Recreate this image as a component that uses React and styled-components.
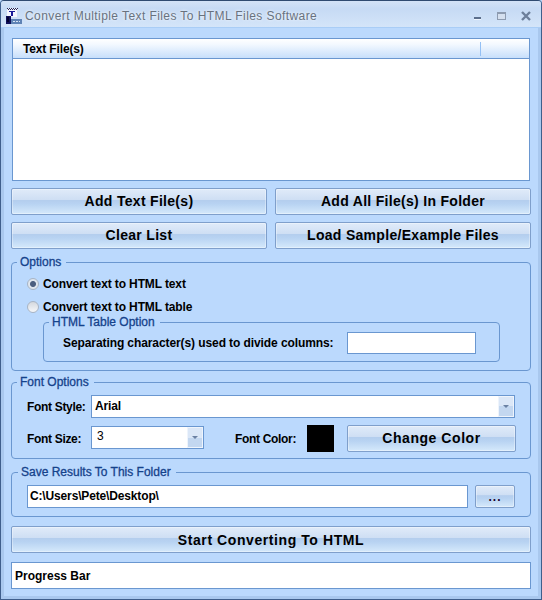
import React from "react";
import styled, { createGlobalStyle } from "styled-components";

const Global = createGlobalStyle`
  html, body {
    margin: 0;
    padding: 0;
    background: #bbd9fd;
  }
  * {
    box-sizing: border-box;
  }
`;

const AppIcon = () => (
  <svg width="16" height="16" viewBox="0 0 16 16" shapeRendering="crispEdges">
    <rect x="1" y="0" width="11" height="2" fill="#f4f6ff" />
    <path d="M1 0h1v1H1zM3 0h1v1H3zM5 0h1v1H5zM7 0h1v1H7zM9 0h1v1H9zM11 0h1v1h-1zM2 1h1v1H2zM4 1h1v1H4zM6 1h1v1H6zM8 1h1v1H8zM10 1h1v1h-1z" fill="#23234f" />
    <rect x="1" y="2" width="10" height="7" fill="#f4f6ff" />
    <path d="M3 3h6v1H7v4H5V4H3z" fill="#1a1a9a" />
    <rect x="0" y="8" width="5" height="8" fill="#10105a" />
    <rect x="1" y="9" width="2" height="5" fill="#000030" />
    <rect x="5" y="11" width="11" height="5" fill="#5f83b5" />
    <rect x="7" y="13" width="2" height="1" fill="#d8e4f4" />
    <rect x="10" y="13" width="2" height="1" fill="#d8e4f4" />
    <rect x="13" y="13" width="1" height="1" fill="#d8e4f4" />
  </svg>
);

const Arrow = () => (
  <svg width="6" height="3" viewBox="0 0 6 3">
    <path d="M0 0h6L3 3z" fill="#6b81a3" />
  </svg>
);

const App = () => {
  return (
    <Window>
      <Global />
      <TitleBar>
        <AppIcon />
        <TitleText>Convert Multiple Text Files To HTML Files Software</TitleText>
        <WinControls>
          <svg width="33" height="14" viewBox="0 0 33 14" shapeRendering="crispEdges">
            <rect x="0" y="8" width="7" height="2" fill="#5c6f8c" />
            <rect x="0" y="10" width="7" height="1" fill="#eef5ff" />
            <rect x="23.5" y="3.5" width="8" height="7" fill="#d5e0ef" stroke="#8d9bb0" />
            <rect x="23" y="3" width="9" height="2" fill="#8d9bb0" />
          </svg>
          <svg width="10" height="10" viewBox="0 0 10 10">
            <path d="M1 1l8 8M9 1L1 9" stroke="#6d7f9a" strokeWidth="2.4" />
          </svg>
        </WinControls>
      </TitleBar>

      <Body>
        <ListBox>
          <ListHeader>
            <HeaderCell>Text File(s)</HeaderCell>
            <HeaderRest />
          </ListHeader>
        </ListBox>

        <ButtonGrid>
          <BigButton>Add Text File(s)</BigButton>
          <BigButton>Add All File(s) In Folder</BigButton>
          <BigButton>Clear List</BigButton>
          <BigButton>Load Sample/Example Files</BigButton>
        </ButtonGrid>

        <OptionsGroup>
          <GroupLegend>Options</GroupLegend>
          <RadioRow>
            <Radio $checked />
            <span>Convert text to HTML text</span>
          </RadioRow>
          <RadioRow>
            <Radio />
            <span>Convert text to HTML table</span>
          </RadioRow>
          <InnerGroup>
            <GroupLegend>HTML Table Option</GroupLegend>
            <SeparatorRow>
              <FieldLabel>Separating character(s) used to divide columns:</FieldLabel>
              <SeparatorInput />
            </SeparatorRow>
          </InnerGroup>
        </OptionsGroup>

        <FontGroup>
          <GroupLegend>Font Options</GroupLegend>
          <FontRow>
            <FontLabel>Font Style:</FontLabel>
            <Select $grow>
              <SelectValue>Arial</SelectValue>
              <SelectArrow><Arrow /></SelectArrow>
            </Select>
          </FontRow>
          <ColorRow>
            <FontLabel>Font Size:</FontLabel>
            <Select>
              <SelectValue $plain>3</SelectValue>
              <SelectArrow><Arrow /></SelectArrow>
            </Select>
            <ColorLabel>Font Color:</ColorLabel>
            <Swatch />
            <ChangeColor>Change Color</ChangeColor>
          </ColorRow>
        </FontGroup>

        <SaveGroup>
          <GroupLegend $indent>Save Results To This Folder</GroupLegend>
          <SaveRow>
            <PathInput>C:\Users\Pete\Desktop\</PathInput>
            <BrowseButton>...</BrowseButton>
          </SaveRow>
        </SaveGroup>

        <StartButton>Start Converting To HTML</StartButton>
        <ProgressBox>Progress Bar</ProgressBox>
      </Body>
    </Window>
  );
};

// styled components
const buttonBg = `linear-gradient(to bottom, #e0ebf9 0%, #cfdff4 42%, #b4ceee 46%, #b8d3f2 60%, #d5e9fb 100%)`;

const Window = styled.div`
  width: 542px;
  height: 600px;
  display: flex;
  flex-direction: column;
  background: #bbd9fd;
  border: 1px solid #3f5f8c;
  border-top-color: #2f4a70;
  border-radius: 4px 4px 0 0;
  font-family: "Liberation Sans", Arial, sans-serif;
  overflow: hidden;
`;

const TitleBar = styled.div`
  height: 27px;
  flex: none;
  display: flex;
  align-items: center;
  padding: 3px 10px 0 5px;
  background: linear-gradient(to bottom, #d3e2f6 0%, #c6daf4 30%, #d4e5f9 100%);
  border-bottom: 1px solid #a9cdf6;
`;

const TitleText = styled.div`
  margin-left: 3px;
  font-size: 12px;
  letter-spacing: 0.42px;
  color: #68727f;
  text-shadow: 0 0 3px #ffffff;
`;

const WinControls = styled.div`
  margin-left: auto;
  display: flex;
  align-items: center;
  gap: 14px;
`;

const Body = styled.div`
  flex: 1;
  display: flex;
  flex-direction: column;
  padding: 10px 7px 0;
  border-left: 3px solid #a9c8ee;
  border-right: 3px solid #a9c8ee;
  border-bottom: 3px solid #a9c8ee;
`;

const ListBox = styled.div`
  height: 143px;
  margin: 0 1px;
  background: #ffffff;
  border: 1px solid #6a97d0;
`;

const ListHeader = styled.div`
  height: 20px;
  display: flex;
  align-items: center;
  background: linear-gradient(to bottom, #ffffff 0%, #f2f8ff 30%, #c7dffb 100%);
  border-bottom: 1px solid #6a97d0;
`;

const HeaderCell = styled.div`
  width: 468px;
  padding-left: 10px;
  font-size: 12px;
  font-weight: 700;
  letter-spacing: -0.15px;
  color: #000000;
  border-right: 1px solid #93c0f5;
  height: 14px;
  line-height: 15px;
`;

const HeaderRest = styled.div`
  flex: 1;
`;

const ButtonGrid = styled.div`
  display: grid;
  grid-template-columns: 256px 256px;
  column-gap: 8px;
  row-gap: 7px;
  margin-top: 7px;
`;

const BigButton = styled.button`
  height: 27px;
  padding: 0 0 2px;
  font-family: inherit;
  font-size: 14px;
  font-weight: 700;
  letter-spacing: 0.3px;
  color: #000000;
  background: ${buttonBg};
  border: 1px solid #7f9fcb;
  border-radius: 2px;
  box-shadow: inset 0 0 0 1px rgba(255, 255, 255, 0.35);
`;

const Group = styled.fieldset`
  margin: 0;
  padding: 0 0 0 15px;
  min-width: 0;
  border: 1px solid #6a97d0;
  border-radius: 4px;
`;

const GroupLegend = styled.legend`
  margin-left: ${(p) => (p.$indent ? "-9px" : "-10px")};
  padding: 0 5px 0 3px;
  font-size: 12px;
  font-weight: 400;
  line-height: 14px;
  color: #15428b;
  -webkit-text-stroke: 0.3px #15428b;
`;

const OptionsGroup = styled(Group)`
  height: 116px;
  margin-top: 6px;
  padding-top: 3px;
  display: flex;
  flex-direction: column;
`;

const RadioRow = styled.label`
  height: 23px;
  display: flex;
  align-items: center;
  gap: 4px;
  font-size: 12px;
  font-weight: 700;
  letter-spacing: -0.12px;
  color: #000000;
`;

const Radio = styled.span`
  width: 12px;
  height: 12px;
  flex: none;
  border-radius: 50%;
  border: 1px solid #a8b4c4;
  background: ${(p) =>
    p.$checked
      ? "radial-gradient(circle, #4c5f80 0 2.5px, #dfe6ee 3.5px)"
      : "linear-gradient(to bottom, #d4d8de, #f5f7fa)"};
`;

const InnerGroup = styled(Group)`
  width: 457px;
  height: 47px;
  margin: -3px 0 0 16px;
  padding-left: 19px;
  & > legend {
    margin-left: -14px;
  }
`;

const SeparatorRow = styled.div`
  display: flex;
  align-items: center;
  margin-top: 3px;
`;

const FieldLabel = styled.span`
  font-size: 12px;
  font-weight: 700;
  letter-spacing: -0.09px;
  color: #000000;
  width: 284px;
`;

const SeparatorInput = styled.input`
  width: 129px;
  height: 22px;
  background: #ffffff;
  border: 1px solid #6a97d0;
  outline: none;
`;

const FontGroup = styled(Group)`
  height: 84px;
  margin-top: 4px;
  padding: 6px 15px 0 15px;
  display: flex;
  flex-direction: column;
  gap: 7px;
`;

const FontRow = styled.div`
  display: flex;
  align-items: center;
  height: 23px;
`;

const ColorRow = styled(FontRow)`
  height: 27px;
`;

const FontLabel = styled.span`
  width: 64px;
  flex: none;
  font-size: 12px;
  font-weight: 700;
  letter-spacing: -0.32px;
  color: #000000;
`;

const Select = styled.div`
  width: ${(p) => (p.$grow ? "auto" : "113px")};
  flex: ${(p) => (p.$grow ? "1" : "none")};
  height: 23px;
  margin-bottom: ${(p) => (p.$grow ? "0" : "3px")};
  display: flex;
  background: #ffffff;
  border: 1px solid #6a97d0;
`;

const SelectValue = styled.div`
  flex: 1;
  padding-left: ${(p) => (p.$plain ? "5px" : "3px")};
  font-size: 12px;
  font-weight: ${(p) => (p.$plain ? 400 : 700)};
  letter-spacing: -0.15px;
  line-height: ${(p) => (p.$plain ? "19px" : "21px")};
  color: #000000;
`;

const SelectArrow = styled.div`
  width: 16px;
  display: flex;
  align-items: center;
  justify-content: center;
  background: linear-gradient(to bottom, #dbe7f7 0 50%, #c3d7f0 50% 100%);
  border: 1px solid #eef4fc;
`;

const ColorLabel = styled.span`
  margin-left: 31px;
  width: 72px;
  flex: none;
  font-size: 12px;
  font-weight: 700;
  letter-spacing: -0.32px;
  color: #000000;
`;

const Swatch = styled.div`
  width: 27px;
  height: 27px;
  flex: none;
  background: #000000;
`;

const ChangeColor = styled(BigButton)`
  margin-left: 13px;
  width: 169px;
  flex: none;
  letter-spacing: 0.55px;
`;

const SaveGroup = styled(Group)`
  height: 52px;
  margin-top: 6px;
  padding: 6px 15px 0 15px;
`;

const SaveRow = styled.div`
  display: flex;
  gap: 7px;
`;

const PathInput = styled.div`
  width: 441px;
  height: 23px;
  padding-left: 2px;
  font-size: 12px;
  font-weight: 700;
  letter-spacing: -0.15px;
  line-height: 21px;
  color: #000000;
  background: #ffffff;
  border: 1px solid #6a97d0;
`;

const BrowseButton = styled(BigButton)`
  width: 40px;
  height: 23px;
  padding: 0;
  font-size: 12px;
  letter-spacing: 1px;
  line-height: 12px;
  color: #20002a;
`;

const StartButton = styled(BigButton)`
  margin-top: 9px;
  width: 100%;
  padding: 0;
  letter-spacing: 0.58px;
`;

const ProgressBox = styled.div`
  height: 27px;
  margin-top: 9px;
  padding-left: 3px;
  font-size: 12px;
  font-weight: 700;
  line-height: 27px;
  color: #000000;
  background: #ffffff;
  border: 1px solid #6a97d0;
`;

export default App;
